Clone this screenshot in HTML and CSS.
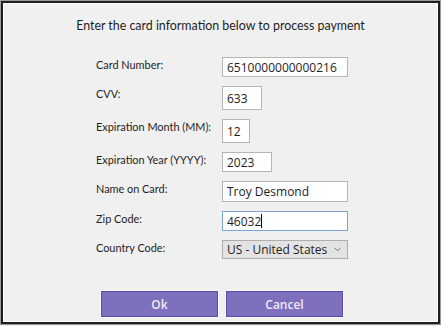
FILE: index.html
```html
<!DOCTYPE html>
<html>
<head>
<meta charset="utf-8">
<link rel="stylesheet" href="styles.css">
</head>
<body>
<div class="frame">
  <div class="dialog">
    <div class="title">Enter the card information below to process payment</div>
    <div class="form">
      <div class="row h20">
        <div class="label">Card Number:</div>
        <div class="field w126">6510000000000216</div>
      </div>
      <div class="row h24">
        <div class="label">CVV:</div>
        <div class="field w40">633</div>
      </div>
      <div class="row h24">
        <div class="label">Expiration Month (MM):</div>
        <div class="field w28">12</div>
      </div>
      <div class="row h20">
        <div class="label">Expiration Year (YYYY):</div>
        <div class="field w50">2023</div>
      </div>
      <div class="row h21">
        <div class="label">Name on Card:</div>
        <div class="field w126">Troy Desmond</div>
      </div>
      <div class="row h20">
        <div class="label">Zip Code:</div>
        <div class="field w126 focused">46032<span class="caret"></span></div>
      </div>
      <div class="row h19">
        <div class="label">Country Code:</div>
        <div class="select w126">
          <span>US - United States</span>
          <svg class="chev" width="7" height="5" viewBox="0 0 7 5"><path d="M0.5 0.8 L3.5 3.8 L6.5 0.8" fill="none" stroke="#777" stroke-width="1"/></svg>
        </div>
      </div>
    </div>
    <div class="buttons">
      <div class="btn">Ok</div>
      <div class="btn">Cancel</div>
    </div>
  </div>
</div>
</body>
</html>
```
FILE: styles.css
```css
html, body {
  margin: 0;
  padding: 0;
  background: #f0f0f0;
}
body {
  width: 441px;
  height: 326px;
  overflow: hidden;
  font-family: "Open Sans", "Noto Sans", sans-serif;
  font-size: 12px;
  color: #1e1e1e;
}
.frame {
  box-sizing: border-box;
  width: 441px;
  height: 325px;
  border: 1px solid #9a9a9a;
  background: #1f1f1f;
  padding: 2px;
}
.dialog {
  box-sizing: border-box;
  height: 100%;
  background: #f0f0f0;
  border: 1px solid #ffffff;
  display: flex;
  flex-direction: column;
}
.title {
  text-align: center;
  margin-top: 13px;
  line-height: 18px;
  font-family: "Lato", "Open Sans", sans-serif;
  font-size: 12.4px;
}
.form {
  margin-top: 22px;
  margin-left: 92px;
  display: flex;
  flex-direction: column;
  gap: 9px;
}
.row {
  display: flex;
  align-items: flex-start;
}
.h20 { height: 20px; }
.h24 { height: 24px; }
.h21 { height: 21px; }
.h19 { height: 19px; }
.label {
  width: 126px;
  line-height: 16px;
  font-family: "Lato", "Open Sans", sans-serif;
  font-size: 10.9px;
}
.field {
  box-sizing: border-box;
  height: 100%;
  background: #fff;
  border: 1px solid #b5b5b5;
  padding-left: 4px;
  display: flex;
  align-items: center;
  font-size: 12px;
}
.field.focused { border-color: #7ba6d8; }
.caret {
  display: inline-block;
  width: 1px;
  height: 14px;
  background: #000;
}
.w126 { width: 126px; }
.w40 { width: 40px; }
.w28 { width: 28px; }
.w50 { width: 50px; }
.select {
  box-sizing: border-box;
  height: 100%;
  background: #e3e3e3;
  border: 1px solid #adadad;
  padding-left: 4px;
  padding-right: 6px;
  display: flex;
  align-items: center;
  justify-content: space-between;
  font-size: 12px;
}
.buttons {
  margin-top: auto;
  margin-bottom: 4px;
  display: flex;
  justify-content: center;
  gap: 8px;
  padding-left: 3px;
}
.btn {
  box-sizing: border-box;
  width: 117px;
  height: 26px;
  background: #7f70be;
  border: 1px solid #5b49ab;
  box-shadow: 0 0 0 1px #fbfbfb;
  color: #eeeaf8;
  display: flex;
  align-items: center;
  justify-content: center;
  font-size: 12px;
  font-weight: 600;
}
```
